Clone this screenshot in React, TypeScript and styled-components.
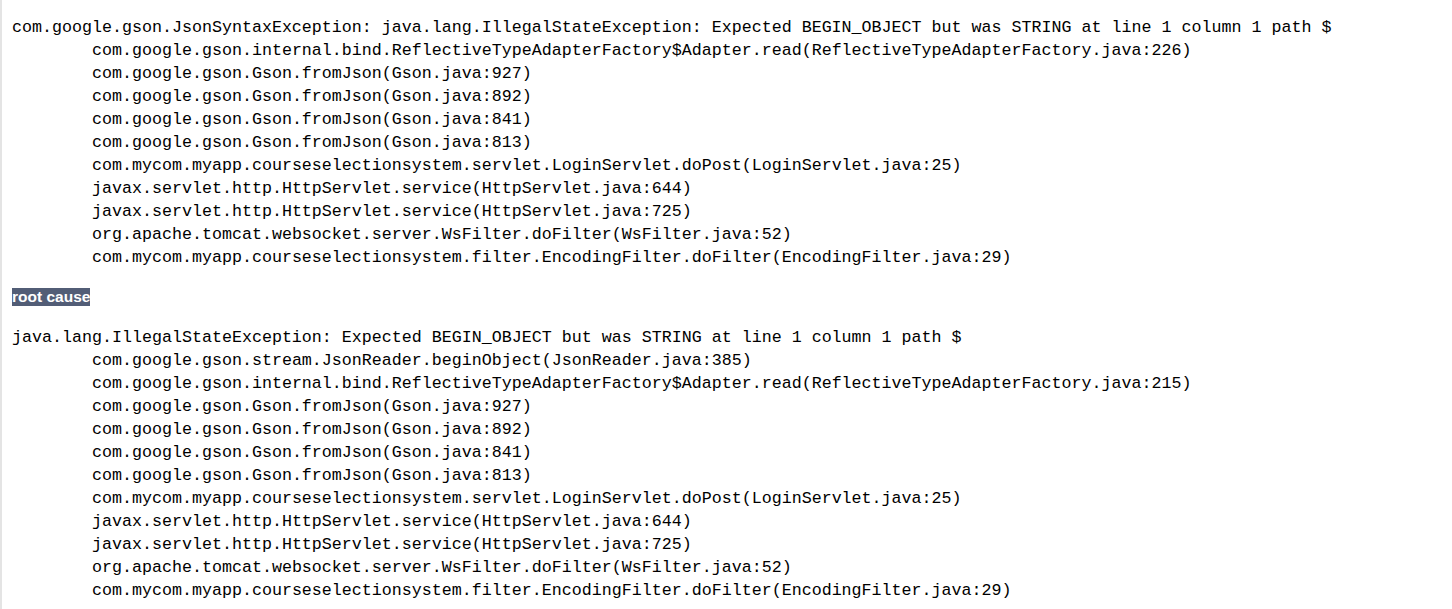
import React from "react";
import styled, { createGlobalStyle } from "styled-components";

const Global = createGlobalStyle`
  html, body { margin: 0; padding: 0; background: #ffffff; }
  body { font-family: "Liberation Serif", serif; }
`;

const Page = styled.div`
  min-height: 609px;
  box-sizing: border-box;
  border-left: 2px solid #e4e4e4;
  padding: 16px 0 0 10px;
  background: #ffffff;
`;

const Trace = styled.pre`
  margin: 0;
  font-family: "Liberation Mono", monospace;
  font-size: 16.667px;
  line-height: 23px;
  color: #000000;
  tab-size: 8;
  white-space: pre;
`;

const Para = styled.p`
  margin: 18px 0 20px 0;
  line-height: 19px;
  height: 19px;
`;

const Label = styled.b`
  font-family: "Liberation Sans", Arial, sans-serif;
  font-size: 15.5px;
  font-weight: 700;
  color: #ffffff;
  background-color: #525d76;
  padding: 0 0 1px 0;
`;

const block1 = [
  "com.google.gson.JsonSyntaxException: java.lang.IllegalStateException: Expected BEGIN_OBJECT but was STRING at line 1 column 1 path $",
  "\tcom.google.gson.internal.bind.ReflectiveTypeAdapterFactory$Adapter.read(ReflectiveTypeAdapterFactory.java:226)",
  "\tcom.google.gson.Gson.fromJson(Gson.java:927)",
  "\tcom.google.gson.Gson.fromJson(Gson.java:892)",
  "\tcom.google.gson.Gson.fromJson(Gson.java:841)",
  "\tcom.google.gson.Gson.fromJson(Gson.java:813)",
  "\tcom.mycom.myapp.courseselectionsystem.servlet.LoginServlet.doPost(LoginServlet.java:25)",
  "\tjavax.servlet.http.HttpServlet.service(HttpServlet.java:644)",
  "\tjavax.servlet.http.HttpServlet.service(HttpServlet.java:725)",
  "\torg.apache.tomcat.websocket.server.WsFilter.doFilter(WsFilter.java:52)",
  "\tcom.mycom.myapp.courseselectionsystem.filter.EncodingFilter.doFilter(EncodingFilter.java:29)",
].join("\n");

const block2 = [
  "java.lang.IllegalStateException: Expected BEGIN_OBJECT but was STRING at line 1 column 1 path $",
  "\tcom.google.gson.stream.JsonReader.beginObject(JsonReader.java:385)",
  "\tcom.google.gson.internal.bind.ReflectiveTypeAdapterFactory$Adapter.read(ReflectiveTypeAdapterFactory.java:215)",
  "\tcom.google.gson.Gson.fromJson(Gson.java:927)",
  "\tcom.google.gson.Gson.fromJson(Gson.java:892)",
  "\tcom.google.gson.Gson.fromJson(Gson.java:841)",
  "\tcom.google.gson.Gson.fromJson(Gson.java:813)",
  "\tcom.mycom.myapp.courseselectionsystem.servlet.LoginServlet.doPost(LoginServlet.java:25)",
  "\tjavax.servlet.http.HttpServlet.service(HttpServlet.java:644)",
  "\tjavax.servlet.http.HttpServlet.service(HttpServlet.java:725)",
  "\torg.apache.tomcat.websocket.server.WsFilter.doFilter(WsFilter.java:52)",
  "\tcom.mycom.myapp.courseselectionsystem.filter.EncodingFilter.doFilter(EncodingFilter.java:29)",
].join("\n");

export default function App() {
  return (
    <>
      <Global />
      <Page>
        <Trace>{block1}</Trace>
        <Para>
          <Label>root cause</Label>
        </Para>
        <Trace>{block2}</Trace>
      </Page>
    </>
  );
}
